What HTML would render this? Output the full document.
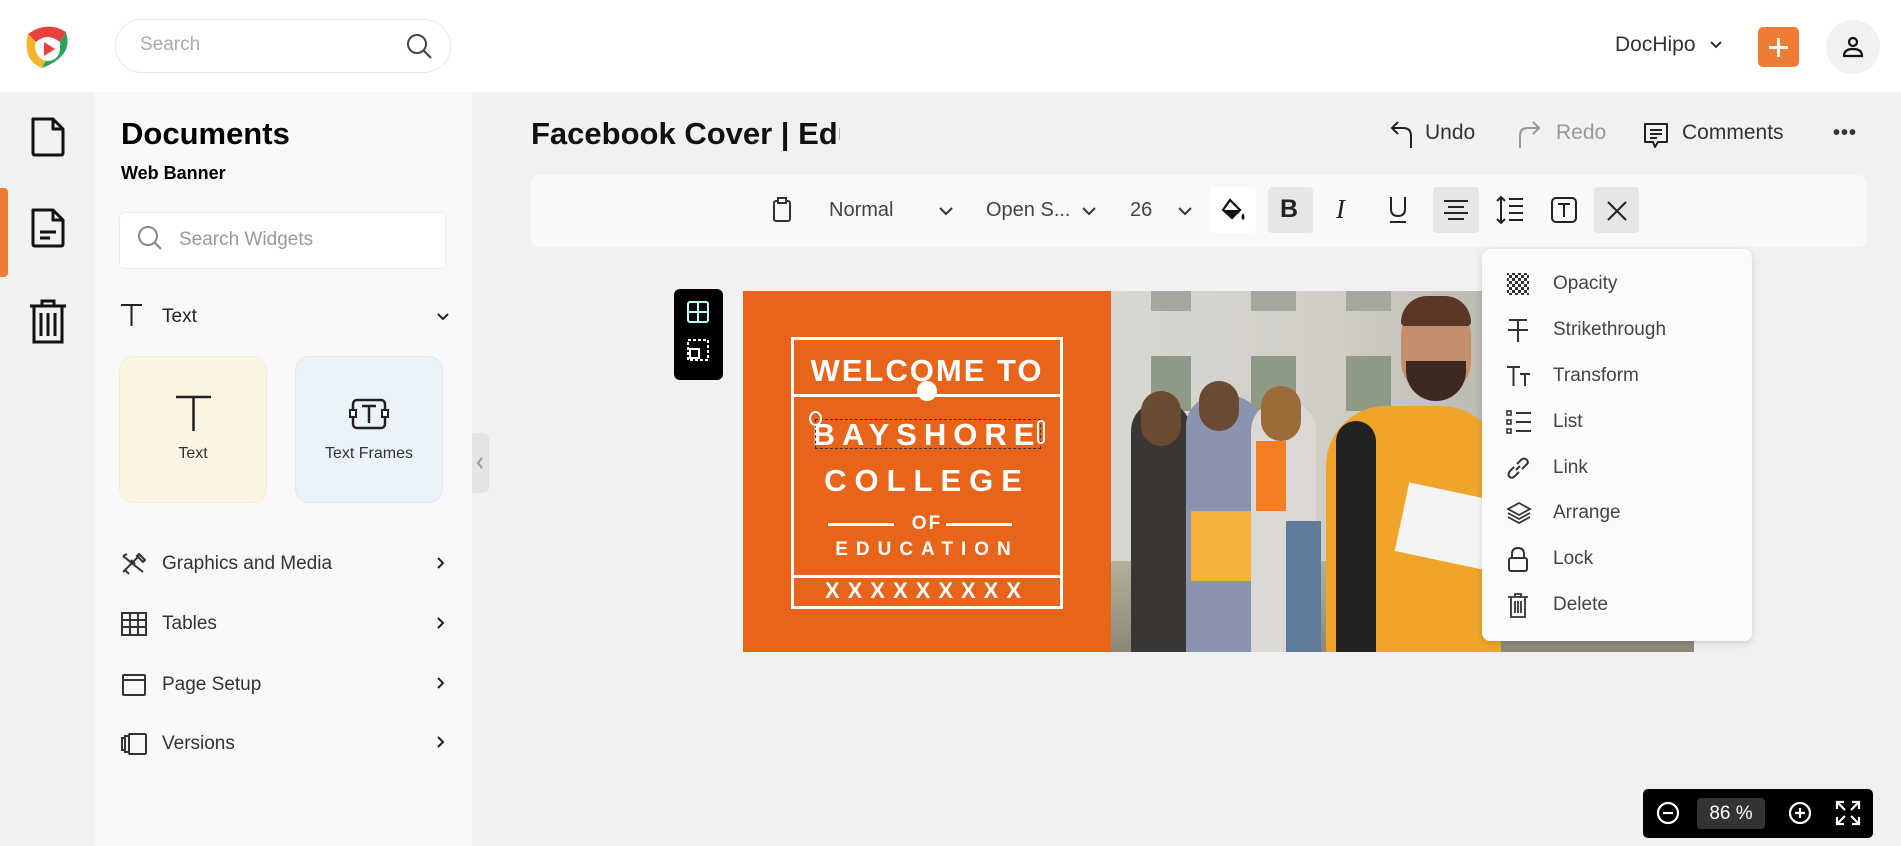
<!DOCTYPE html>
<html><head><meta charset="utf-8"><style>
*{box-sizing:border-box;margin:0;padding:0}
body{width:1901px;height:846px;overflow:hidden;font-family:"Liberation Sans",sans-serif;background:#f1f1f1;position:relative;color:#222}
.abs{position:absolute}
svg{display:block}
.hdr{left:0;top:0;width:1901px;height:92px;background:#fff}
.rail{left:0;top:92px;width:94px;height:754px;background:#f1f1f1}
.panel{left:94px;top:92px;width:378px;height:754px;background:#f8f8f8}
.row{position:absolute;left:121px;font-size:19px;color:#333;display:flex;align-items:center}
.row .lb{position:absolute;left:41px;white-space:nowrap}
.chev{position:absolute;left:436px;font-size:16px;color:#333}
.tb{left:531px;top:175px;width:1336px;height:72px;background:#f8f8f8;border-radius:8px}
.ti{position:absolute;top:0;height:72px;display:flex;align-items:center;font-size:20px;color:#444}
.box{position:absolute;top:187px;height:46px;border-radius:4px}
.menu{left:1482px;top:249px;width:270px;height:392px;background:#fbfbfb;border-radius:8px;box-shadow:0 2px 8px rgba(0,0,0,.15)}
.mi{position:absolute;left:0;width:270px;height:40px;display:flex;align-items:center;font-size:19px;color:#444}
.mi svg{position:absolute;left:24px}
.mi span{position:absolute;left:71px}
.wt{position:absolute;left:0;width:272px;text-align:center;color:#fff;font-weight:bold}
</style></head><body>
<div class="abs hdr"></div>
<!-- logo -->
<svg class="abs" style="left:22px;top:20px" width="50" height="50" viewBox="0 0 50 50">
<path d="M6 14 Q25 0 44 12 L38 22 Q25 12 14 22Z" fill="#e8403a"/>
<path d="M6 14 L14 22 Q10 34 24 40 L20 48 Q0 40 6 14Z" fill="#f4b52a"/>
<path d="M44 12 Q52 36 20 48 L24 40 Q40 34 38 22Z" fill="#2aa35a"/>
<circle cx="26" cy="29" r="12" fill="#fff"/>
<path d="M22 22 L33 29 L22 36Z" fill="#e8403a"/>
</svg>
<div class="abs" style="left:115px;top:19px;width:336px;height:54px;border:1px solid #e8e8e8;border-radius:27px;background:#fff"></div>
<div class="abs" style="left:140px;top:34px;font-size:19px;color:#aaa">Search</div>
<svg class="abs" style="left:405px;top:32px" width="28" height="28" viewBox="0 0 28 28"><circle cx="12" cy="12" r="9" fill="none" stroke="#444" stroke-width="2"/><path d="M19 19 L26 26" stroke="#444" stroke-width="2.2"/></svg>
<div class="abs" style="left:1615px;top:33px;font-size:21px;color:#333">DocHipo</div>
<svg class="abs" style="left:1709px;top:40px" width="14" height="10" viewBox="0 0 14 10"><path d="M2 2 L7 7 L12 2" fill="none" stroke="#333" stroke-width="2"/></svg>
<div class="abs" style="left:1758px;top:27px;width:41px;height:40px;background:#ef7c33;border-radius:5px"></div>
<svg class="abs" style="left:1766px;top:35px" width="25" height="25"><path d="M12.5 3 V22 M3 12.5 H22" stroke="#fff" stroke-width="3"/></svg>
<div class="abs" style="left:1826px;top:20px;width:54px;height:54px;border-radius:27px;background:#f1f1f1"></div>
<svg class="abs" style="left:1840px;top:34px" width="26" height="26" viewBox="0 0 26 26"><circle cx="13" cy="8" r="4" fill="none" stroke="#111" stroke-width="2.2"/><path d="M4 22 Q4 15 13 15 Q22 15 22 22Z" fill="none" stroke="#111" stroke-width="2.2"/></svg>

<div class="abs rail"></div>
<div class="abs" style="left:0;top:188px;width:8px;height:89px;background:#ef7c33;border-radius:0 4px 4px 0"></div>
<svg class="abs" style="left:29px;top:115px" width="38" height="44" viewBox="0 0 38 44"><path d="M4 4 H24 L34 14 V38 Q34 40 32 40 H6 Q4 40 4 38Z M24 4 V14 H34" fill="none" stroke="#111" stroke-width="3" stroke-linejoin="round"/></svg>
<svg class="abs" style="left:29px;top:206px" width="38" height="44" viewBox="0 0 38 44"><path d="M4 4 H24 L34 14 V38 Q34 40 32 40 H6 Q4 40 4 38Z M24 4 V14 H34 M11 26 H27 M11 32 H21" fill="none" stroke="#111" stroke-width="3" stroke-linejoin="round"/></svg>
<svg class="abs" style="left:28px;top:298px" width="40" height="48" viewBox="0 0 40 48"><path d="M2 8 H38 M14 8 V3 H26 V8 M6 8 V44 H34 V8 M13 15 V38 M20 15 V38 M27 15 V38" fill="none" stroke="#111" stroke-width="3"/></svg>

<div class="abs panel"></div>
<div class="abs" style="left:121px;top:116px;font-size:31px;font-weight:bold;color:#000">Documents</div>
<div class="abs" style="left:121px;top:163px;font-size:18px;font-weight:bold;color:#000">Web Banner</div>
<div class="abs" style="left:119px;top:212px;width:327px;height:57px;background:#fff;border:1px solid #ececec;border-radius:5px"></div>
<svg class="abs" style="left:136px;top:224px" width="28" height="28" viewBox="0 0 28 28"><circle cx="12" cy="12" r="9" fill="none" stroke="#888" stroke-width="2"/><path d="M19 19 L25 25" stroke="#888" stroke-width="2.2"/></svg>
<div class="abs" style="left:179px;top:229px;font-size:19px;color:#999">Search Widgets</div>
<svg class="abs" style="left:120px;top:303px" width="24" height="24" viewBox="0 0 24 24"><path d="M1 2 H22 M11.5 2 V23" stroke="#222" stroke-width="2"/></svg>
<div class="abs" style="left:162px;top:306px;font-size:19px;color:#222">Text</div>
<svg class="abs" style="left:436px;top:312px" width="14" height="10" viewBox="0 0 14 10"><path d="M2 2 L7 7 L12 2" fill="none" stroke="#222" stroke-width="2"/></svg>
<div class="abs" style="left:119px;top:356px;width:148px;height:147px;background:#fcf4e2;border:1px solid #f7ecd0;border-radius:14px"></div>
<svg class="abs" style="left:175px;top:395px" width="38" height="38" viewBox="0 0 38 38"><path d="M1 2 H36 M18.5 2 V36" stroke="#222" stroke-width="2.5"/></svg>
<div class="abs" style="left:119px;top:445px;width:148px;text-align:center;font-size:16px;color:#333">Text</div>
<div class="abs" style="left:295px;top:356px;width:148px;height:147px;background:#eaf2fa;border:1px solid #dfe9f4;border-radius:14px"></div>
<svg class="abs" style="left:349px;top:396px" width="40" height="36" viewBox="0 0 40 36"><rect x="4" y="4" width="32" height="28" rx="4" fill="none" stroke="#222" stroke-width="2.5"/><rect x="1" y="14" width="6" height="7" fill="#fff" stroke="#222" stroke-width="2"/><rect x="33" y="14" width="6" height="7" fill="#fff" stroke="#222" stroke-width="2"/><path d="M13 10 H27 M20 10 V27" stroke="#222" stroke-width="2.5"/></svg>
<div class="abs" style="left:295px;top:445px;width:148px;text-align:center;font-size:16px;color:#333">Text Frames</div>

<div class="row" style="top:552px"><svg width="26" height="24" viewBox="0 0 26 24"><path d="M2 4 L22 20 M2 20 L18 4 M18 2 L24 8 L22 10 L16 4Z M2 4 L6 2 M4 18 L8 22 M10 8 L14 12" fill="none" stroke="#333" stroke-width="2"/></svg><span class="lb">Graphics and Media</span></div>
<div class="row" style="top:612px"><svg width="26" height="24" viewBox="0 0 26 24"><rect x="1" y="1" width="24" height="22" fill="none" stroke="#333" stroke-width="2"/><path d="M1 8 H25 M1 15 H25 M9 1 V23 M17 1 V23" stroke="#333" stroke-width="2"/></svg><span class="lb">Tables</span></div>
<div class="row" style="top:673px"><svg width="26" height="24" viewBox="0 0 26 24"><rect x="2" y="2" width="22" height="20" rx="1" fill="none" stroke="#333" stroke-width="2"/><path d="M2 7 H24" stroke="#333" stroke-width="2"/></svg><span class="lb">Page Setup</span></div>
<div class="row" style="top:732px"><svg width="26" height="24" viewBox="0 0 26 24"><rect x="8" y="2" width="17" height="20" rx="1" fill="none" stroke="#333" stroke-width="2"/><path d="M8 4 H4 V20 H8 M4 6 H1 V18 H4" fill="none" stroke="#333" stroke-width="2"/></svg><span class="lb">Versions</span></div>
<svg class="abs" style="left:436px;top:556px" width="10" height="14"><path d="M2 2 L7 7 L2 12" fill="none" stroke="#222" stroke-width="2"/></svg>
<svg class="abs" style="left:436px;top:616px" width="10" height="14"><path d="M2 2 L7 7 L2 12" fill="none" stroke="#222" stroke-width="2"/></svg>
<svg class="abs" style="left:436px;top:676px" width="10" height="14"><path d="M2 2 L7 7 L2 12" fill="none" stroke="#222" stroke-width="2"/></svg>
<svg class="abs" style="left:436px;top:735px" width="10" height="14"><path d="M2 2 L7 7 L2 12" fill="none" stroke="#222" stroke-width="2"/></svg>
<div class="abs" style="left:472px;top:433px;width:17px;height:60px;background:#e4e4e4;border-radius:0 6px 6px 0"></div>
<svg class="abs" style="left:475px;top:456px" width="10" height="14"><path d="M7 2 L3 7 L7 12" fill="none" stroke="#999" stroke-width="2"/></svg>

<!-- title -->
<div class="abs" style="left:531px;top:116px;width:309px;overflow:hidden;white-space:nowrap;font-size:31px;font-weight:bold;color:#111">Facebook Cover | Education</div>
<svg class="abs" style="left:1389px;top:120px" width="26" height="30" viewBox="0 0 26 30"><path d="M9 2 L3 8 L9 14 M3 8 H14 Q22 8 22 16 V28" fill="none" stroke="#222" stroke-width="2"/></svg>
<div class="abs" style="left:1425px;top:121px;font-size:21px;color:#333">Undo</div>
<svg class="abs" style="left:1516px;top:120px" width="26" height="30" viewBox="0 0 26 30"><path d="M17 2 L23 8 L17 14 M23 8 H12 Q4 8 4 16 V28" fill="none" stroke="#999" stroke-width="2"/></svg>
<div class="abs" style="left:1556px;top:121px;font-size:21px;color:#999">Redo</div>
<svg class="abs" style="left:1643px;top:122px" width="26" height="28" viewBox="0 0 26 28"><path d="M2 2 H24 V20 H15 L12 25 L10 20 H2Z M7 8 H19 M7 12 H19 M7 16 H14" fill="none" stroke="#222" stroke-width="2" stroke-linejoin="round"/></svg>
<div class="abs" style="left:1682px;top:121px;font-size:21px;color:#333">Comments</div>
<div class="abs" style="left:1833px;top:122px;font-size:20px;font-weight:bold;color:#333;letter-spacing:1px">•••</div>

<!-- toolbar -->
<div class="abs tb"></div>
<div class="box" style="left:1210px;width:46px;background:#fff"></div>
<div class="box" style="left:1268px;width:45px;background:#e6e6e6"></div>
<div class="box" style="left:1433px;width:46px;background:#e6e6e6"></div>
<div class="box" style="left:1594px;width:45px;background:#e6e6e6"></div>
<svg class="abs" style="left:771px;top:197px" width="22" height="26" viewBox="0 0 22 26"><rect x="3" y="4" width="16" height="20" rx="2" fill="none" stroke="#333" stroke-width="2"/><rect x="7" y="1" width="8" height="5" fill="#fff" stroke="#333" stroke-width="2"/></svg>
<div class="abs" style="left:829px;top:199px;font-size:20px;color:#444">Normal</div>
<svg class="abs" style="left:938px;top:206px" width="16" height="10"><path d="M2 2 L8 8 L14 2" fill="none" stroke="#333" stroke-width="2"/></svg>
<div class="abs" style="left:986px;top:199px;font-size:20px;color:#444">Open S...</div>
<svg class="abs" style="left:1081px;top:206px" width="16" height="10"><path d="M2 2 L8 8 L14 2" fill="none" stroke="#333" stroke-width="2"/></svg>
<div class="abs" style="left:1130px;top:199px;font-size:20px;color:#444">26</div>
<svg class="abs" style="left:1177px;top:206px" width="16" height="10"><path d="M2 2 L8 8 L14 2" fill="none" stroke="#333" stroke-width="2"/></svg>
<svg class="abs" style="left:1220px;top:197px" width="28" height="28" viewBox="0 0 28 28"><path d="M10 3 L20 13 L12 21 L3 13Z" fill="none" stroke="#111" stroke-width="2.2"/><path d="M3 13 L12 21 L20 13Z" fill="#111"/><path d="M23 16 Q20 21 23 23 Q26 21 23 16Z" fill="#111"/></svg>
<div class="abs" style="left:1280px;top:195px;font-size:25px;font-weight:bold;color:#222">B</div>
<div class="abs" style="left:1336px;top:194px;font-size:27px;font-style:italic;font-family:'Liberation Serif',serif;color:#222">I</div>
<svg class="abs" style="left:1387px;top:195px" width="22" height="30" viewBox="0 0 22 30"><path d="M4 2 V14 Q4 21 11 21 Q18 21 18 14 V2 M3 27 H19" fill="none" stroke="#222" stroke-width="2"/></svg>
<svg class="abs" style="left:1442px;top:198px" width="28" height="24" viewBox="0 0 28 24"><path d="M2 3 H26 M6 9 H22 M2 15 H26 M6 21 H22" stroke="#222" stroke-width="2"/></svg>
<svg class="abs" style="left:1496px;top:195px" width="28" height="30" viewBox="0 0 28 30"><path d="M5 2 V28 M1 6 L5 2 L9 6 M1 24 L5 28 L9 24 M13 4 H27 M13 11 H27 M13 18 H27 M13 25 H27" fill="none" stroke="#222" stroke-width="2"/></svg>
<svg class="abs" style="left:1550px;top:196px" width="28" height="28" viewBox="0 0 28 28"><rect x="2" y="2" width="24" height="24" rx="4" fill="none" stroke="#222" stroke-width="2"/><path d="M8 8 H20 M14 8 V21" stroke="#222" stroke-width="2"/></svg>
<svg class="abs" style="left:1605px;top:199px" width="24" height="24"><path d="M3 3 L21 21 M21 3 L3 21" stroke="#222" stroke-width="2"/></svg>

<!-- mini toolbar -->
<div class="abs" style="left:674px;top:289px;width:49px;height:91px;background:#000;border-radius:6px"></div>
<svg class="abs" style="left:686px;top:300px" width="24" height="24"><rect x="2" y="2" width="20" height="20" rx="2" fill="none" stroke="#bff" stroke-width="2"/><path d="M12 2 V22 M2 12 H22" stroke="#bff" stroke-width="2"/></svg>
<svg class="abs" style="left:686px;top:338px" width="24" height="24"><rect x="2" y="2" width="20" height="20" fill="none" stroke="#fff" stroke-width="2" stroke-dasharray="3 2"/><rect x="4" y="11" width="9" height="9" fill="none" stroke="#fff" stroke-width="2"/></svg>

<!-- canvas -->
<div class="abs" style="left:743px;top:291px;width:368px;height:361px;background:#e7641a"></div>
<div class="abs" style="left:1111px;top:291px;width:583px;height:361px;overflow:hidden;background:linear-gradient(90deg,#d9d7d2 0%,#cfcdc6 40%,#b7b5ac 70%,#8c8a80 100%)">
  <div class="abs" style="left:40px;top:0;width:40px;height:20px;background:#a6a79c"></div>
  <div class="abs" style="left:40px;top:65px;width:40px;height:55px;background:#8f9a86"></div>
  <div class="abs" style="left:140px;top:65px;width:45px;height:55px;background:#8f9a86"></div>
  <div class="abs" style="left:235px;top:65px;width:45px;height:55px;background:#8f9a86"></div>
  <div class="abs" style="left:140px;top:0;width:45px;height:20px;background:#a6a79c"></div>
  <div class="abs" style="left:235px;top:0;width:45px;height:20px;background:#a6a79c"></div>
  <div class="abs" style="left:0;top:270px;width:583px;height:91px;background:linear-gradient(#b5b09c,#8c8778)"></div>
  <div class="abs" style="left:20px;top:110px;width:60px;height:251px;background:#3a3634;border-radius:30px 30px 0 0"></div>
  <div class="abs" style="left:30px;top:100px;width:40px;height:55px;background:#6b4a34;border-radius:20px"></div>
  <div class="abs" style="left:75px;top:105px;width:75px;height:256px;background:#8a94ad;border-radius:30px 30px 0 0"></div>
  <div class="abs" style="left:88px;top:90px;width:40px;height:50px;background:#6a4a35;border-radius:20px"></div>
  <div class="abs" style="left:80px;top:220px;width:65px;height:70px;background:#f3b03b"></div>
  <div class="abs" style="left:140px;top:110px;width:65px;height:251px;background:#dcd8d4;border-radius:30px 30px 0 0"></div>
  <div class="abs" style="left:150px;top:95px;width:40px;height:55px;background:#9a6c3a;border-radius:20px"></div>
  <div class="abs" style="left:145px;top:150px;width:30px;height:70px;background:#f57e22"></div>
  <div class="abs" style="left:175px;top:230px;width:35px;height:131px;background:#5d7b9c"></div>
  <div class="abs" style="left:215px;top:115px;width:175px;height:246px;background:#f0a52a;border-radius:60px 60px 0 0"></div>
  <div class="abs" style="left:225px;top:130px;width:40px;height:231px;background:#222;border-radius:20px 20px 0 0"></div>
  <div class="abs" style="left:290px;top:10px;width:70px;height:95px;background:#c38e6c;border-radius:35px"></div>
  <div class="abs" style="left:290px;top:5px;width:70px;height:30px;background:#5a3825;border-radius:35px 35px 5px 5px"></div>
  <div class="abs" style="left:295px;top:70px;width:60px;height:40px;background:#3d2a1f;border-radius:0 0 30px 30px"></div>
  <div class="abs" style="left:290px;top:200px;width:90px;height:70px;background:#f4f4f4;transform:rotate(12deg)"></div>
</div>
<div class="abs" style="left:791px;top:337px;width:272px;height:272px;border:3px solid #fff"></div>
<div class="abs" style="left:791px;top:394px;width:272px;height:3px;background:#fff"></div>
<div class="abs" style="left:791px;top:575px;width:272px;height:3px;background:#fff"></div>
<div class="abs" style="left:791px;top:337px;width:272px;height:272px">
  <div class="wt" style="top:16px;font-size:31px;letter-spacing:2px">WELCOME TO</div>
  <div class="wt" style="top:80px;font-size:31px;letter-spacing:7px">BAYSHORE</div>
  <div class="wt" style="top:126px;font-size:31px;letter-spacing:8px">COLLEGE</div>
  <div class="wt" style="top:176px;font-size:19px;letter-spacing:2px">OF</div>
  <div class="abs" style="left:37px;top:186px;width:66px;height:3px;background:#fff"></div>
  <div class="abs" style="left:155px;top:186px;width:66px;height:3px;background:#fff"></div>
  <div class="wt" style="top:202px;font-size:19px;letter-spacing:8px">EDUCATION</div>
  <div class="wt" style="top:241px;font-size:22px;letter-spacing:8px">XXXXXXXXX</div>
</div>
<div class="abs" style="left:815px;top:419px;width:226px;height:30px;border:1px dashed #334"></div>
<div class="abs" style="left:809px;top:411px;width:13px;height:15px;border:2px solid #fff;border-radius:50%"></div>
<div class="abs" style="left:1037px;top:420px;width:8px;height:24px;border:2px solid #fff;border-radius:4px"></div>
<div class="abs" style="left:917px;top:381px;width:20px;height:20px;background:#fff;border-radius:50%"></div>

<!-- menu -->
<div class="abs menu">
 <div class="mi" style="top:15px"><svg width="24" height="24"><defs><pattern id="ck" width="6" height="6" patternUnits="userSpaceOnUse"><rect width="3" height="3" fill="#333"/><rect x="3" y="3" width="3" height="3" fill="#333"/></pattern></defs><rect x="1" y="1" width="22" height="22" fill="url(#ck)"/></svg><span>Opacity</span></div>
 <div class="mi" style="top:61px"><svg width="24" height="26"><path d="M3 3 H21 M12 3 V25 M2 13 H22" stroke="#333" stroke-width="2"/></svg><span>Strikethrough</span></div>
 <div class="mi" style="top:107px"><svg width="26" height="24"><path d="M1 3 H14 M7.5 3 V22 M14 10 H24 M19 10 V22" stroke="#333" stroke-width="2"/></svg><span>Transform</span></div>
 <div class="mi" style="top:153px"><svg width="26" height="24"><path d="M10 3 H25 M10 12 H25 M10 21 H25" stroke="#333" stroke-width="2"/><rect x="1" y="1" width="4" height="4" fill="none" stroke="#333" stroke-width="1.6"/><rect x="1" y="10" width="4" height="4" fill="none" stroke="#333" stroke-width="1.6"/><rect x="1" y="19" width="4" height="4" fill="none" stroke="#333" stroke-width="1.6"/></svg><span>List</span></div>
 <div class="mi" style="top:199px"><svg width="24" height="24"><path d="M10 14 L14 10 M8 11 L4 15 Q1 19 4 21 Q6 23 9 20 L13 16 M11 8 L15 4 Q18 1 21 4 Q23 7 20 9 L16 13" fill="none" stroke="#333" stroke-width="2"/></svg><span>Link</span></div>
 <div class="mi" style="top:244px"><svg width="26" height="24"><path d="M13 2 L24 8 L13 14 L2 8Z M2 12 L13 18 L24 12 M2 16 L13 22 L24 16" fill="none" stroke="#333" stroke-width="1.8"/></svg><span>Arrange</span></div>
 <div class="mi" style="top:290px"><svg width="24" height="26"><path d="M6 12 V8 Q6 2 12 2 Q18 2 18 8 V12" fill="none" stroke="#333" stroke-width="2"/><rect x="3" y="12" width="18" height="13" rx="2" fill="none" stroke="#333" stroke-width="2"/></svg><span>Lock</span></div>
 <div class="mi" style="top:336px"><svg width="24" height="26"><path d="M2 5 H22 M9 5 V2 H15 V5 M5 5 V25 H19 V5 M9 9 V21 M12 9 V21 M15 9 V21" fill="none" stroke="#333" stroke-width="1.8"/></svg><span>Delete</span></div>
</div>

<!-- zoom bar -->
<div class="abs" style="left:1643px;top:789px;width:230px;height:49px;background:#000;border-radius:5px"></div>
<svg class="abs" style="left:1656px;top:801px" width="24" height="24"><circle cx="12" cy="12" r="10" fill="none" stroke="#fff" stroke-width="2.2"/><path d="M7 12 H17" stroke="#fff" stroke-width="2.2"/></svg>
<div class="abs" style="left:1697px;top:798px;width:68px;height:31px;background:#333;border-radius:4px;color:#fff;font-size:19px;text-align:center;line-height:31px">86 %</div>
<svg class="abs" style="left:1788px;top:801px" width="24" height="24"><circle cx="12" cy="12" r="10" fill="none" stroke="#fff" stroke-width="2.2"/><path d="M7 12 H17 M12 7 V17" stroke="#fff" stroke-width="2.2"/></svg>
<svg class="abs" style="left:1835px;top:800px" width="26" height="26"><path d="M2 9 V2 H9 M2 2 L10 10 M17 2 H24 V9 M24 2 L16 10 M2 17 V24 H9 M2 24 L10 16 M24 17 V24 H17 M24 24 L16 16" fill="none" stroke="#fff" stroke-width="2.2"/></svg>
</body></html>
